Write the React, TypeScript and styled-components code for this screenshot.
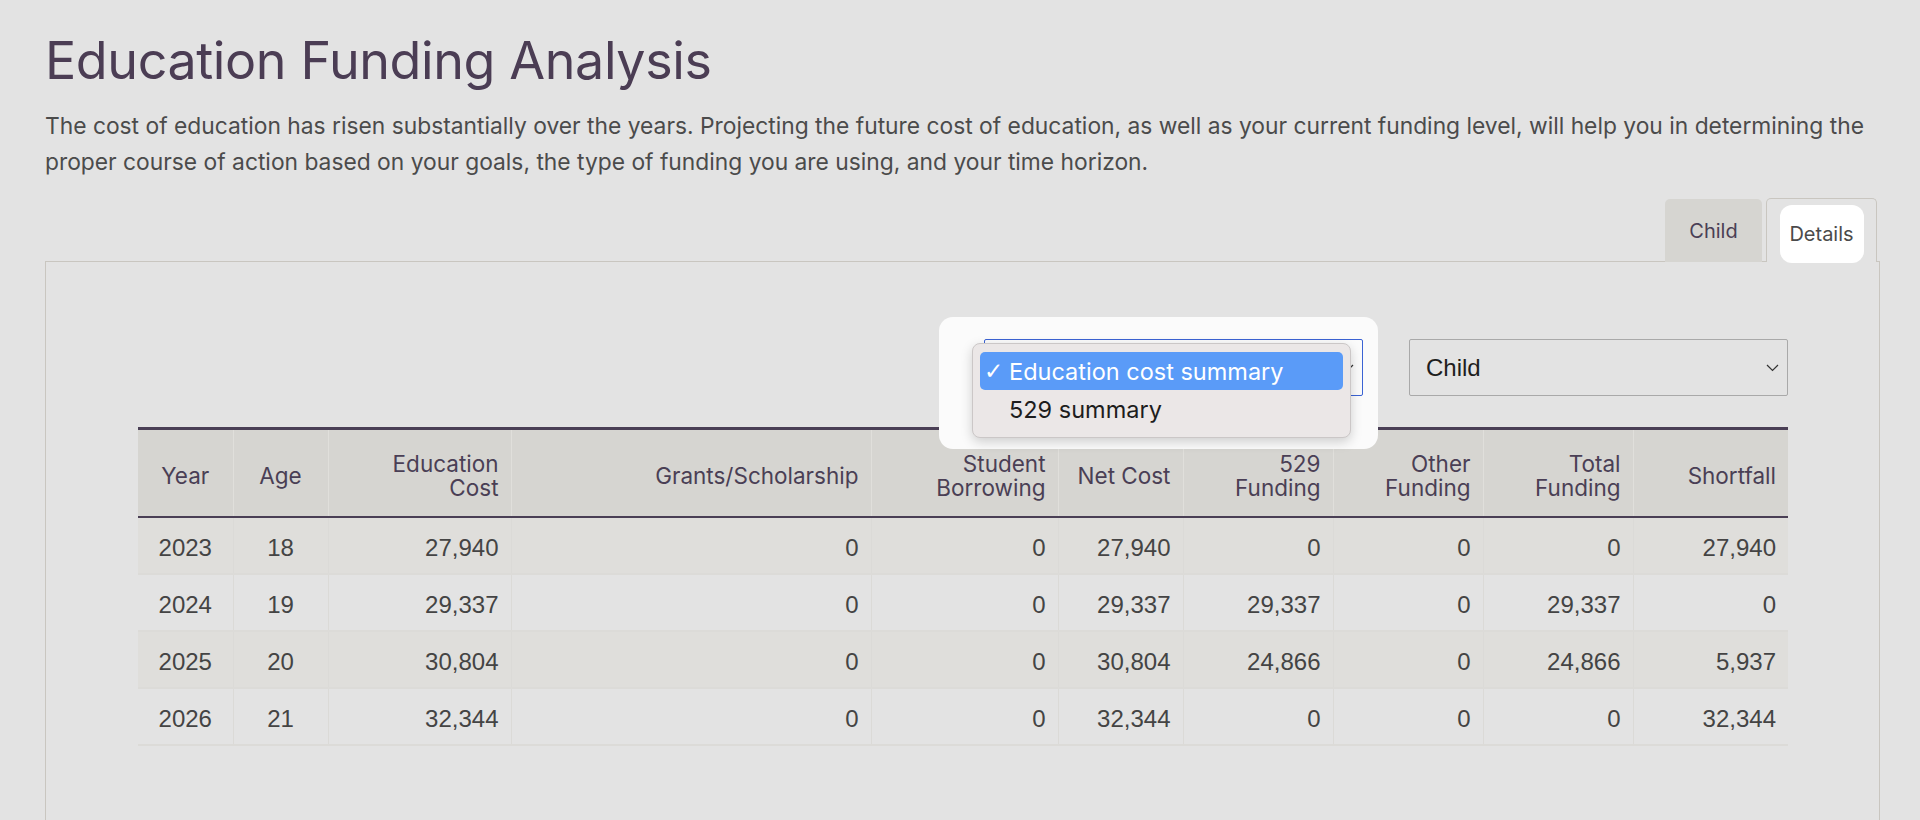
import React from "react";
import styled, { createGlobalStyle } from "styled-components";

const GlobalStyle = createGlobalStyle`
  html, body { margin: 0; padding: 0; }
  body {
    background: #e3e3e3;
    font-family: Inter, "Noto Sans", sans-serif;
    overflow: hidden;
  }
  * { box-sizing: border-box; }
`;

const Page = styled.div`
  padding: 0 40px 0 45px;
  height: 820px;
  overflow: hidden;
`;

const Title = styled.h1`
  margin: 30px 0 0 0;
  font-family: Inter, sans-serif;
  font-weight: 400;
  font-size: 52px;
  line-height: 1.21;
  color: #4b3d54;
  letter-spacing: -0.4px;
`;

const Intro = styled.p`
  margin: 15px 0 0 0;
  font-size: 22.8px;
  line-height: 36px;
  color: #4b4b4b;
  max-width: 1830px;
`;

const TabBar = styled.div`
  display: flex;
  justify-content: flex-end;
  align-items: flex-end;
  gap: 4px;
  margin-top: 18px;
  padding-right: 3px;
  margin-bottom: -1px;
  position: relative;
  z-index: 2;
`;

const Tab = styled.div<{ $active?: boolean }>`
  width: ${(p) => (p.$active ? "111px" : "97px")};
  height: ${(p) => (p.$active ? "64px" : "63px")};
  display: flex;
  justify-content: center;
  align-items: ${(p) => (p.$active ? "flex-start" : "center")};
  padding-top: ${(p) => (p.$active ? "6px" : "2px")};
  border-radius: 5px 5px 0 0;
  font-size: 20px;
  color: ${(p) => (p.$active ? "#4b4b4b" : "#4a3f55")};
  background: ${(p) => (p.$active ? "#e3e3e3" : "#d6d5d1")};
  border: ${(p) => (p.$active ? "1px solid #c9c6c0" : "none")};
  border-bottom: none;
`;

const TabFocus = styled.div`
  width: 84px;
  height: 58px;
  background: #ffffff;
  border-radius: 12px;
  display: flex;
  align-items: center;
  justify-content: center;
`;

const Panel = styled.div`
  border: 1px solid #c9c6c0;
  border-bottom: none;
  min-height: 620px;
  padding: 77px 91px 0 92px;
`;

const Controls = styled.div`
  display: flex;
  justify-content: flex-end;
  gap: 46px;
`;

const SelectWrap = styled.div`
  position: relative;
  width: 379px;
  height: 57px;
`;

const Halo = styled.div`
  position: absolute;
  left: -45px;
  top: -22px;
  width: 439px;
  height: 132px;
  background: #fbfbfb;
  border-radius: 14px;
  z-index: 0;
`;

const SelectBox = styled.div<{ $focused?: boolean }>`
  position: relative;
  z-index: 1;
  width: 100%;
  height: 100%;
  display: flex;
  align-items: center;
  justify-content: space-between;
  padding: 2px 8px 0 16px;
  border: 1px solid ${(p) => (p.$focused ? "#3b63d4" : "#a9a9a9")};
  border-radius: 2px;
  background: ${(p) => (p.$focused ? "transparent" : "#e3e3e3")};
  font-family: "Liberation Sans", Arial, sans-serif;
  font-size: 24px;
  color: #1e1e1e;
`;

const Menu = styled.div`
  position: absolute;
  z-index: 3;
  left: -12px;
  top: 4px;
  width: 379px;
  height: 95px;
  padding: 8px 7px;
  background: #ebe7e7;
  border: 1px solid #cbc7c7;
  border-radius: 8px;
  box-shadow: 0 4px 12px rgba(0, 0, 0, 0.18);
  display: flex;
  flex-direction: column;
`;

const MenuItem = styled.div<{ $selected?: boolean }>`
  height: 39px;
  display: flex;
  align-items: center;
  border-radius: 5px;
  padding-left: 4px;
  font-size: 23.5px;
  color: ${(p) => (p.$selected ? "#ffffff" : "#1d1d1d")};
  background: ${(p) => (p.$selected ? "#5a9bf8" : "transparent")};
`;

const Check = styled.span`
  width: 25px;
  font-family: "DejaVu Sans", sans-serif;
  font-size: 23px;
`;

const Table = styled.table`
  margin-top: 31px;
  width: 1650px;
  border-collapse: collapse;
  border-top: 3px solid #4a3f55;
  table-layout: fixed;
`;

const Th = styled.th<{ $center?: boolean }>`
  height: 89px;
  padding: 5px 12px 0 12px;
  background: #d6d5d1;
  color: #4a3f55;
  font-family: Inter, sans-serif;
  font-weight: 400;
  font-size: 22.5px;
  line-height: 23.5px;
  text-align: ${(p) => (p.$center ? "center" : "right")};
  vertical-align: middle;
  border-bottom: 2px solid #4a3f55;
  border-left: 1px solid #e0dfdb;
  &:first-child { border-left: none; }
`;

const Tr = styled.tr<{ $odd?: boolean }>`
  background: ${(p) => (p.$odd ? "#dfdedb" : "transparent")};
`;

const Td = styled.td<{ $center?: boolean }>`
  height: 57px;
  padding: 5px 12px 0 12px;
  font-family: "Liberation Sans", Arial, sans-serif;
  font-size: 24px;
  color: #444444;
  text-align: ${(p) => (p.$center ? "center" : "right")};
  vertical-align: middle;
  border-bottom: 2px solid #dcdbd8;
  border-left: 1px solid #dbdad7;
  &:first-child { border-left: none; }
`;

const Chevron = () => (
  <svg width="13" height="8" viewBox="0 0 13 8" fill="none">
    <path d="M1 1 L6.5 6.5 L12 1" stroke="#333" strokeWidth="1.2" />
  </svg>
);

const columns: { label: React.ReactNode; width: number; center?: boolean }[] = [
  { label: "Year", width: 95, center: true },
  { label: "Age", width: 95, center: true },
  { label: <>Education<br />Cost</>, width: 183 },
  { label: "Grants/Scholarship", width: 360 },
  { label: <>Student<br />Borrowing</>, width: 187 },
  { label: "Net Cost", width: 125 },
  { label: <>529<br />Funding</>, width: 150 },
  { label: <>Other<br />Funding</>, width: 150 },
  { label: <>Total<br />Funding</>, width: 150 },
  { label: "Shortfall", width: 155 },
];

const rows = [
  ["2023", "18", "27,940", "0", "0", "27,940", "0", "0", "0", "27,940"],
  ["2024", "19", "29,337", "0", "0", "29,337", "29,337", "0", "29,337", "0"],
  ["2025", "20", "30,804", "0", "0", "30,804", "24,866", "0", "24,866", "5,937"],
  ["2026", "21", "32,344", "0", "0", "32,344", "0", "0", "0", "32,344"],
];

export default function App() {
  return (
    <>
      <GlobalStyle />
      <Page>
        <Title>Education Funding Analysis</Title>
        <Intro>
          The cost of education has risen substantially over the years. Projecting the future cost of
          education, as well as your current funding level, will help you in determining the proper
          course of action based on your goals, the type of funding you are using, and your time
          horizon.
        </Intro>
        <TabBar>
          <Tab>Child</Tab>
          <Tab $active>
            <TabFocus>Details</TabFocus>
          </Tab>
        </TabBar>
        <Panel>
          <Controls>
            <SelectWrap>
              <Halo />
              <SelectBox $focused>
                <span />
                <Chevron />
              </SelectBox>
              <Menu>
                <MenuItem $selected>
                  <Check>✓</Check>Education cost summary
                </MenuItem>
                <MenuItem>
                  <Check />529 summary
                </MenuItem>
              </Menu>
            </SelectWrap>
            <SelectWrap>
              <SelectBox>
                <span>Child</span>
                <Chevron />
              </SelectBox>
            </SelectWrap>
          </Controls>
          <Table>
            <colgroup>
              {columns.map((c, i) => (
                <col key={i} style={{ width: c.width }} />
              ))}
            </colgroup>
            <thead>
              <tr>
                {columns.map((c, i) => (
                  <Th key={i} $center={c.center}>
                    {c.label}
                  </Th>
                ))}
              </tr>
            </thead>
            <tbody>
              {rows.map((r, ri) => (
                <Tr key={ri} $odd={ri % 2 === 0}>
                  {r.map((v, ci) => (
                    <Td key={ci} $center={columns[ci].center}>
                      {v}
                    </Td>
                  ))}
                </Tr>
              ))}
            </tbody>
          </Table>
        </Panel>
      </Page>
    </>
  );
}
